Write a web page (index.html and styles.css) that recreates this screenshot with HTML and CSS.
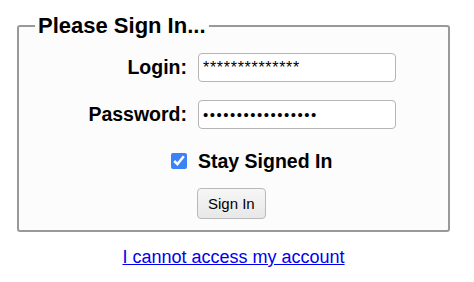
FILE: index.html
```html
<!DOCTYPE html>
<html>
<head>
<meta charset="utf-8">
<link rel="stylesheet" href="styles.css">
</head>
<body>
<form class="signin">
  <fieldset class="box">
    <legend class="box-title">Please Sign In...</legend>
    <div class="row row-login">
      <label class="lbl" for="login">Login:</label>
      <input class="field field-login" id="login" type="text" value="**************">
    </div>
    <div class="row row-pw">
      <label class="lbl" for="pw">Password:</label>
      <input class="field field-pw" id="pw" type="password" value="abcdefghijklmnopq">
    </div>
    <div class="row row-stay">
      <span class="lbl check-cell"><input class="check" id="stay" type="checkbox" checked></span>
      <label class="stay-lbl" for="stay">Stay Signed In</label>
    </div>
    <div class="row row-btn">
      <span class="lbl"></span>
      <button class="btn" type="button">Sign In</button>
    </div>
  </fieldset>
  <div class="help"><a class="help-link" href="#">I cannot access my account</a></div>
</form>
</body>
</html>
```
FILE: styles.css
```css
html, body {
  margin: 0;
  padding: 0;
  background: #ffffff;
}
body {
  font-family: "Liberation Sans", Arial, sans-serif;
  padding: 15px 0 0 17px;
}
.signin {
  width: 433px;
}
.box {
  margin: 0;
  padding: 16px 0 0 0;
  border: 2px solid #999999;
  border-radius: 3px;
  background: #fcfcfc;
  box-sizing: border-box;
  height: 217px;
}
.box-title {
  font-weight: bold;
  font-size: 22px;
  line-height: 22px;
  padding: 0 3px;
  margin-left: 16px;
  color: #000;
}
.row {
  display: flex;
  align-items: center;
  gap: 11px;
}
.row-pw {
  margin-top: 18px;
}
.row-stay {
  margin-top: 18px;
  height: 28px;
}
.row-btn {
  margin-top: 13px;
}
.lbl {
  flex: 0 0 168px;
  font-weight: bold;
  font-size: 19.5px;
  text-align: right;
  color: #000;
}
.stay-lbl {
  font-weight: bold;
  font-size: 19.5px;
  color: #000;
}
.field {
  box-sizing: border-box;
  width: 198px;
  height: 29px;
  margin: 0;
  border: 1px solid #b5b5b5;
  border-radius: 4px;
  background: #fff;
  font-family: "Liberation Sans", Arial, sans-serif;
  padding: 0 4px;
  color: #000;
}
.field-login {
  font-size: 16px;
  letter-spacing: 0.7px;
}
.field-pw {
  font-size: 15px;
  letter-spacing: 1.5px;
}
.check-cell {
  display: flex;
  justify-content: flex-end;
}
.check {
  width: 16px;
  height: 16px;
  margin: 0;
  accent-color: #3b82f6;
}
.btn {
  box-sizing: border-box;
  height: 31px;
  padding: 0 10px;
  margin: 0 0 0 -1px;
  border: 1px solid #b9b9b9;
  border-radius: 4px;
  background: linear-gradient(#f6f6f6, #e8e8e8);
  font-family: "Liberation Sans", Arial, sans-serif;
  font-size: 15px;
  color: #000;
}
.help {
  text-align: center;
  margin-top: 15px;
}
.help-link {
  font-size: 18px;
  color: #0000ee;
  text-decoration: underline;
}
```
